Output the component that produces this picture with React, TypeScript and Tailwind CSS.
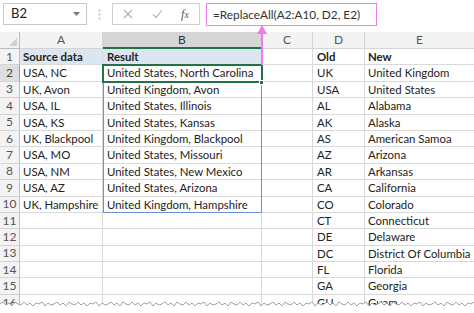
import React from "react";

const FONT = { fontFamily: "Lato, 'Open Sans', sans-serif" };

const rowsLeft: [string, string][] = [
  ["Source data", "Result"],
  ["USA, NC", "United States, North Carolina"],
  ["UK, Avon", "United Kingdom, Avon"],
  ["USA, IL", "United States, Illinois"],
  ["USA, KS", "United States, Kansas"],
  ["UK, Blackpool", "United Kingdom, Blackpool"],
  ["USA, MO", "United States, Missouri"],
  ["USA, NM", "United States, New Mexico"],
  ["USA, AZ", "United States, Arizona"],
  ["UK, Hampshire", "United Kingdom, Hampshire"],
  ["", ""],
  ["", ""],
  ["", ""],
  ["", ""],
  ["", ""],
  ["", ""],
];

const rowsRight: [string, string][] = [
  ["Old", "New"],
  ["UK", "United Kingdom"],
  ["USA", "United States"],
  ["AL", "Alabama"],
  ["AK", "Alaska"],
  ["AS", "American Samoa"],
  ["AZ", "Arizona"],
  ["AR", "Arkansas"],
  ["CA", "California"],
  ["CO", "Colorado"],
  ["CT", "Connecticut"],
  ["DE", "Delaware"],
  ["DC", "District Of Columbia"],
  ["FL", "Florida"],
  ["GA", "Georgia"],
  ["GU", "Guam"],
];

function tearPoints() {
  const pts: string[] = [];
  const offs = [0, -2, 1, -1, 2, -2, 0, 1, -2, 1, -1, 2, -1, 0, -2, 2, -1, 1];
  let i = 0;
  for (let x = 0; x <= 476; x += 3) {
    pts.push(`${x},${5 + offs[i % offs.length]}`);
    i++;
  }
  return pts.join(" ");
}

export default function App() {
  const tp = tearPoints();
  return (
    <div
      className="relative w-[474px] h-[313px] overflow-hidden bg-white text-[#222]"
      style={FONT}
    >
      {/* top bar */}
      <div className="flex h-[32px] items-start pt-[3px]">
        <div className="ml-[3px] flex h-[22px] w-[84px] shrink-0 items-center justify-between border border-[#c8c8c8] pl-[7px] pr-[6px] text-[13px]">
          <span>B2</span>
          <svg width="7" height="4" viewBox="0 0 7 4">
            <polygon points="0,0 7,0 3.5,4" fill="#777" />
          </svg>
        </div>
        <div className="flex h-[22px] w-[25px] shrink-0 items-center justify-center">
          <svg width="3" height="11" viewBox="0 0 3 11">
            <circle cx="1.5" cy="1.5" r="1" fill="#bbb" />
            <circle cx="1.5" cy="5.5" r="1" fill="#bbb" />
            <circle cx="1.5" cy="9.5" r="1" fill="#bbb" />
          </svg>
        </div>
        <div className="flex h-[22px] w-[88px] shrink-0 items-center border border-[#d0d0d0]">
          <div className="flex w-[30px] justify-center">
            <svg width="10" height="10" viewBox="0 0 10 10">
              <path d="M1 1 L9 9 M9 1 L1 9" stroke="#b5b5b5" strokeWidth="1.2" />
            </svg>
          </div>
          <div className="flex w-[28px] justify-center">
            <svg width="11" height="10" viewBox="0 0 11 10">
              <path d="M1 5.5 L4 8.5 L10 1" stroke="#b5b5b5" strokeWidth="1.2" fill="none" />
            </svg>
          </div>
          <div className="flex w-[28px] justify-center">
            <span
              className="text-[12px] italic text-[#555]"
              style={{ fontFamily: "'Liberation Serif', serif" }}
            >
              f<span className="text-[10px]">x</span>
            </span>
          </div>
        </div>
        <div className="ml-[6px] flex h-[23px] min-w-0 flex-1 items-start">
          <div className="flex h-[23px] w-[171px] shrink-0 items-center overflow-hidden whitespace-nowrap border-[1.5px] border-[#ef7df0] pl-[6px] text-[11.8px] text-[#333]">
            =ReplaceAll(A2:A10, D2, E2)
          </div>
        </div>
      </div>

      {/* column headers */}
      <div className="flex h-[17px] text-[12px] text-[#555]">
        <div className="relative w-[20px] shrink-0 border-b border-r border-[#bdbdbd] bg-[#f3f3f3]">
          <svg className="absolute bottom-[2px] right-[2px]" width="8" height="8" viewBox="0 0 8 8">
            <polygon points="8,0 8,8 0,8" fill="#d0d0d0" />
          </svg>
        </div>
        <div className="flex w-[83px] shrink-0 items-center justify-center border-b border-r border-[#d4d4d4] bg-[#f3f3f3]">A</div>
        <div className="flex w-[159px] shrink-0 items-center justify-center border-b-2 border-r border-b-[#217346] border-r-[#bdbdbd] bg-[#d6d6d6] text-[#333]">B</div>
        <div className="flex w-[51px] shrink-0 items-center justify-center border-b border-r border-[#d4d4d4] bg-[#f3f3f3]">C</div>
        <div className="flex w-[52px] shrink-0 items-center justify-center border-b border-r border-[#d4d4d4] bg-[#f3f3f3]">D</div>
        <div className="flex min-w-0 flex-1 items-center justify-center border-b border-[#d4d4d4] bg-[#f3f3f3]">E</div>
      </div>

      {/* rows */}
      {rowsLeft.map((r, i) => {
        const n = i + 1;
        const head = n === 1;
        const right = rowsRight[i];
        return (
          <div key={n} className="flex h-[16.4px] text-[11.4px] leading-none">
            <div
              className={
                "flex w-[20px] shrink-0 items-center justify-center border-b border-r border-[#d4d4d4] text-[12px] " +
                (n === 2 ? "bg-[#dedede] text-[#444] border-r-[#9a9a9a]" : "bg-[#f3f3f3] text-[#555] border-r-[#bdbdbd]")
              }
            >
              {n}
            </div>
            <div
              className={
                "flex w-[83px] shrink-0 items-center overflow-hidden whitespace-nowrap border-b border-r border-[#d9d9d9] pl-[3px] " +
                (head ? "bg-[#dce6f1] font-bold" : "")
              }
            >
              {r[0]}
            </div>
            <div
              className={
                "flex w-[159px] shrink-0 items-center overflow-hidden whitespace-nowrap border-b border-r border-[#d9d9d9] pl-[4px] " +
                (head ? "bg-[#dce6f1] font-bold" : "")
              }
            >
              {r[1]}
            </div>
            <div className="w-[51px] shrink-0 border-b border-r border-[#d9d9d9]" />
            <div
              className={
                "flex w-[52px] shrink-0 items-center border-b border-r border-[#d9d9d9] pl-[4px] " +
                (head ? "font-bold" : "")
              }
            >
              {right[0]}
            </div>
            <div
              className={
                "flex min-w-0 flex-1 items-center overflow-hidden whitespace-nowrap border-b border-[#d9d9d9] pl-[3px] " +
                (head ? "font-bold" : "")
              }
            >
              {right[1]}
            </div>
          </div>
        );
      })}

      {/* spill range border */}
      <div className="pointer-events-none absolute left-[103px] top-[65.4px] h-[147.6px] w-[159px] border border-[#6d8fd3]" />
      {/* active cell */}
      <div className="pointer-events-none absolute left-[102px] top-[64.4px] h-[18.4px] w-[161px] border-2 border-[#217346]" />
      <div className="pointer-events-none absolute left-[259px] top-[80px] h-[5px] w-[5px] border border-white bg-[#217346]" />

      {/* pink arrow */}
      <svg className="pointer-events-none absolute left-[255px] top-[25px]" width="14" height="42" viewBox="0 0 14 42">
        <line x1="7" y1="6" x2="7" y2="40" stroke="#ee7cf0" strokeWidth="2" />
        <polygon points="7,0 12,9 2,9" fill="#ee7cf0" />
      </svg>

      {/* torn edge */}
      <svg className="pointer-events-none absolute bottom-0 left-0" width="474" height="14" viewBox="0 0 474 14">
        <polygon points={`${tp} 476,14 0,14`} fill="white" />
        <polyline points={tp} fill="none" stroke="#8a8a8a" strokeWidth="0.8" />
      </svg>
    </div>
  );
}
